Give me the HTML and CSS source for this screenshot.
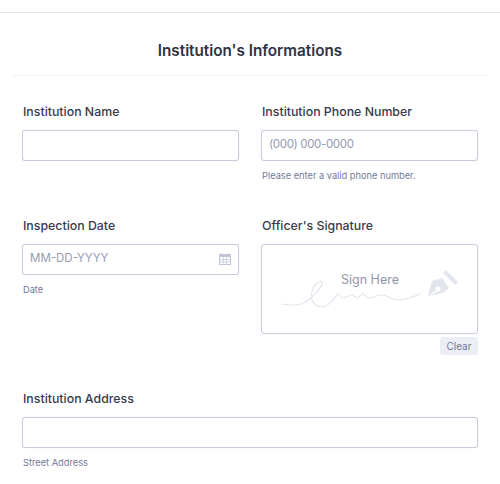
FILE: index.html
```html
<!DOCTYPE html>
<html lang="en">
<head>
    <meta charset="UTF-8">
    <title>Institution's Informations</title>
    <link rel="stylesheet" href="styles.css">
</head>
<body>
    <main class="form-card">
        <header class="form-header">
            <h1>Institution's Informations</h1>
        </header>

        <div class="form-row row-first">
            <div class="field">
                <label for="name">Institution Name</label>
                <input id="name" type="text">
            </div>
            <div class="field">
                <label for="phone">Institution Phone Number</label>
                <input id="phone" class="phone-input" type="text" placeholder="(000) 000-0000">
                <p class="sublabel">Please enter a valid phone number.</p>
            </div>
        </div>

        <div class="form-row row-second">
            <div class="field">
                <label for="date">Inspection Date</label>
                <div class="date-input">
                    <input id="date" type="text" placeholder="MM-DD-YYYY">
                    <svg class="calendar-icon" viewBox="0 0 12 12" width="12" height="12">
                        <path fill="#c2c6d8" d="M2.500 0h1v1h5V0h1v1H12v11H0V1h2.500zM1 4v2h2.900V4zm3.600 0v2h2.800V4zm3.500 0v2H11V4zM1 6.800V8.500h2.900V6.800zm3.600 0V8.500h2.800V6.800zm3.500 0V8.500H11V6.800zM1 9.200V11h2.900V9.200zm3.600 0V11h2.800V9.200zm3.500 0V11H11V9.200z"/>
                    </svg>
                </div>
                <p class="sublabel">Date</p>
            </div>
            <div class="field">
                <label>Officer's Signature</label>
                <div class="signature-pad">
                    <svg class="signature-art" viewBox="0 0 217 89" width="217" height="89">
                        <path fill="none" stroke="#e3e5ee" stroke-width="1.200" stroke-linecap="round" d="M21 60c5 1 9 1 13 1 4 0 9-2 12-4 6-4 15-13 15-18 0-3-4-1-7 2-3 4-4 9-3 15 1 4 5 7 10 7 5 0 8-4 11-7 2-2 3-6 5-6 2 0 3 4 5 4 3 0 6-3 9-3 2 0 3 3 5 3 2 0 4-4 6-4 2 0 3 4 5 4 5 0 9-3 14-3 6 0 10 5 15 5 8 0 16-3 23-6"/>
                        <path fill="#e3e5ee" fill-rule="evenodd" d="M167 52l4-15 10-3 7 10-6 5-15 3zm10-9.500a2.500 2.500 0 1 0 0 5 2.500 2.500 0 0 0 0-5zm-1.800 4.300l-6.500 3.500 1 1 6.500-3.500z"/>
                        <path fill="#e3e5ee" d="M182 29l3-3 12 12-3 3z"/>
                    </svg>
                    <span class="sign-text">Sign Here</span>
                </div>
                <div class="signature-actions">
                    <button type="button" class="clear-button">Clear</button>
                </div>
            </div>
        </div>

        <div class="form-row-single">
            <div class="field">
                <label for="address">Institution Address</label>
                <input id="address" type="text">
                <p class="sublabel">Street Address</p>
            </div>
        </div>
    </main>
</body>
</html>
```

FILE: styles.css
```css
html, body {
    margin: 0;
    height: 484px;
    overflow: hidden;
    background-color: #ffffff;
    font-family: 'Inter', sans-serif;
    color: #2c3345;
}

.form-card {
    margin-top: 12px;
    border-top: 1px solid #e3e5ee;
}

.form-header {
    margin: 0 11px;
    height: 62px;
    border-bottom: 1px solid #f3f3f7;
    display: flex;
    align-items: center;
    justify-content: center;
}

.form-header h1 {
    margin: 0;
    padding-top: 13px;
    font-size: 15.250px;
    font-weight: 600;
    line-height: 20px;
    color: #2c3345;
}

.form-row {
    display: grid;
    grid-template-columns: 217px 217px;
    column-gap: 22px;
    padding: 0 22px;
}

.row-first {
    padding-top: 27px;
    height: 114px;
}

.row-second {
    height: 173px;
}

.form-row-single {
    padding: 0 22px;
}

.field label {
    display: block;
    font-size: 12.350px;
    font-weight: 500;
    line-height: 18px;
    margin: 0 0 9px 1px;
    color: #343b50;
}

input {
    display: block;
    box-sizing: border-box;
    width: 100%;
    height: 31px;
    padding: 0 7px 3px;
    border: 1px solid #c8cbda;
    border-radius: 3px;
    box-shadow: 0 0 1px #d5d8e6;
    background-color: #ffffff;
    font-family: 'Inter', sans-serif;
    font-size: 11.500px;
    color: #2c3345;
}

input::placeholder {
    color: #959bb2;
    opacity: 1;
}

.phone-input {
    letter-spacing: -0.350px;
}

.sublabel {
    margin: 8px 0 0 1px;
    font-size: 9.250px;
    line-height: 13px;
    color: #737a96;
}

.date-input {
    position: relative;
}

.calendar-icon {
    position: absolute;
    right: 8px;
    top: 9px;
}

.signature-pad {
    position: relative;
    box-sizing: border-box;
    height: 90px;
    border: 1px solid #c8cbda;
    border-radius: 3px;
    box-shadow: 0 0 1px #d5d8e6;
}

.signature-art {
    position: absolute;
    left: -1px;
    top: -1px;
}

.sign-text {
    position: absolute;
    left: 79px;
    top: 27px;
    font-size: 12.500px;
    line-height: 16px;
    color: #8f95ad;
}

.signature-actions {
    display: flex;
    justify-content: flex-end;
    margin-top: 3px;
}

.clear-button {
    width: 38px;
    height: 18px;
    padding: 0;
    border: none;
    border-radius: 3px;
    background-color: #eceef5;
    font-family: 'Inter', sans-serif;
    font-size: 10px;
    color: #737a96;
}
```
